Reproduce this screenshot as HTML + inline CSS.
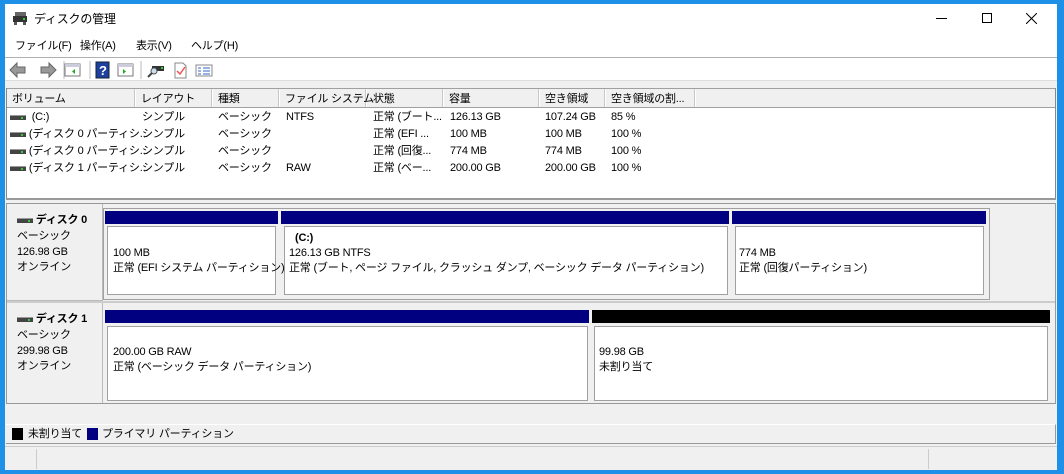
<!DOCTYPE html>
<html><head><meta charset="utf-8"><style>
*{margin:0;padding:0;box-sizing:border-box}
body{width:1064px;height:474px;background:#1e90e8;position:relative;overflow:hidden;font-family:"Liberation Sans","Noto Sans CJK JP",sans-serif;font-size:11px;letter-spacing:-0.2px;color:#000}
.a{position:absolute;white-space:nowrap}
.win{position:absolute;left:5px;top:4px;width:1052px;height:466px;background:#f0f0f0}
.t{line-height:14px}
.hd{position:absolute;top:88px;height:20px;border-top:1px solid #a0a0a0;border-bottom:1px solid #a0a0a0;background:#f0f0f0}
.sep{position:absolute;top:89px;width:2px;height:18px;border-left:1px solid #c8c8c8;border-right:1px solid #fff}
.dsk{display:inline-block;width:16px;height:5px;background:#444;border-top:1px solid #999;position:relative;vertical-align:middle}
.dsk:after{content:"";position:absolute;right:3px;top:1px;width:2px;height:2px;background:#3c3}
.inner{position:absolute;border:1px solid #a0a0a0;background:#fff}
</style></head><body>
<div class="win"></div>
<div class="a" style="left:5px;top:4px;width:1052px;height:53px;background:#fff"></div>
<svg class="a" style="left:12px;top:12px" width="16" height="14"><rect x="3" y="0" width="11" height="4" fill="#666"/><rect x="1" y="4" width="14" height="6" fill="#333"/><rect x="2" y="10" width="3" height="3" fill="#555"/><rect x="11" y="10" width="3" height="3" fill="#555"/><rect x="11" y="6" width="2" height="2" fill="#3c3"/></svg>
<div class="a" style="left:34px;top:10px;font-size:12px;line-height:18px">ディスクの管理</div>
<div class="a" style="left:936px;top:18px;width:11px;height:1px;background:#000"></div>
<div class="a" style="left:982px;top:13px;width:10px;height:10px;border:1px solid #000"></div>
<svg class="a" style="left:1026px;top:13px" width="11" height="11"><path d="M0 0L11 11M11 0L0 11" stroke="#000" stroke-width="1"/></svg>
<div class="a" style="left:15px;top:38px;line-height:16px">ファイル(F)</div>
<div class="a" style="left:80px;top:38px;line-height:16px">操作(A)</div>
<div class="a" style="left:136px;top:38px;line-height:16px">表示(V)</div>
<div class="a" style="left:191px;top:38px;line-height:16px">ヘルプ(H)</div>
<div class="a" style="left:5px;top:57px;width:1052px;height:1px;background:#b0b0b0"></div>
<div class="a" style="left:5px;top:58px;width:1052px;height:23px;background:#fff;border-bottom:1px solid #ddd"></div>
<svg class="a" style="left:8px;top:61px" width="210" height="18">
<path d="M2 9L9 2V6H17V12H9V16Z" fill="#999" stroke="#666"/>
<path d="M48 9L41 2V6H33V12H41V16Z" fill="#999" stroke="#666"/>
<line x1="56" y1="0" x2="56" y2="18" stroke="#bbb"/>
<rect x="57" y="3" width="15" height="12" fill="#fff" stroke="#777"/><rect x="57" y="3" width="15" height="3" fill="#ccd"/><path d="M67 8V13L64 10.5Z" fill="#2a2"/>
<line x1="82" y1="0" x2="82" y2="18" stroke="#bbb"/>
<rect x="88" y="1" width="13" height="16" fill="#2040a0" stroke="#123"/><text x="91" y="14" fill="#fff" font-size="13" font-weight="bold" font-family="Liberation Sans">?</text>
<rect x="110" y="3" width="15" height="12" fill="#fff" stroke="#777"/><rect x="110" y="3" width="15" height="3" fill="#ccd"/><path d="M115 8V13L118 10.5Z" fill="#2a2"/>
<line x1="133" y1="0" x2="133" y2="18" stroke="#bbb"/>
<rect x="144" y="5" width="12" height="5" fill="#333"/><rect x="153" y="6" width="2" height="2" fill="#3c3"/><circle cx="146" cy="10" r="3" fill="#cde" stroke="#555"/><line x1="144" y1="12" x2="140" y2="16" stroke="#444" stroke-width="2"/>
<path d="M167 2H175L178 5V17H167Z" fill="#fff" stroke="#888"/><path d="M169 10L172 13L177 6" stroke="#e55" fill="none" stroke-width="1.5"/>
<rect x="188" y="4" width="16" height="11" fill="#fff" stroke="#888"/><path d="M190 7h3M195 7h7M190 10h3M195 10h7M190 13h3M195 13h7" stroke="#36c"/>
</svg>
<div class="a" style="left:6px;top:88px;width:1050px;height:111px;background:#fff;border-left:1px solid #888;border-right:1px solid #888"></div>
<div class="hd" style="left:7px;width:1048px"></div>
<div class="sep" style="left:134px"></div><div class="sep" style="left:211px"></div><div class="sep" style="left:278px"></div><div class="sep" style="left:365px"></div><div class="sep" style="left:442px"></div><div class="sep" style="left:538px"></div><div class="sep" style="left:604px"></div><div class="sep" style="left:694px"></div>
<div class="a t" style="left:12px;top:92px">ボリューム</div>
<div class="a t" style="left:141px;top:92px">レイアウト</div>
<div class="a t" style="left:218px;top:92px">種類</div>
<div class="a t" style="left:285px;top:92px">ファイル システム</div>
<div class="a t" style="left:373px;top:92px">状態</div>
<div class="a t" style="left:449px;top:92px">容量</div>
<div class="a t" style="left:545px;top:92px">空き領域</div>
<div class="a t" style="left:611px;top:92px">空き領域の割...</div>
<div class="a t" style="left:10px;top:110px"><span class="dsk"></span>&nbsp;&nbsp;(C:)</div>
<div class="a t" style="left:10px;top:127px"><span class="dsk"></span> (ディスク 0 パーティシ...</div>
<div class="a t" style="left:10px;top:144px"><span class="dsk"></span> (ディスク 0 パーティシ...</div>
<div class="a t" style="left:10px;top:161px"><span class="dsk"></span> (ディスク 1 パーティシ...</div>
<div class="a t" style="left:142px;top:110px">シンプル</div><div class="a t" style="left:142px;top:127px">シンプル</div><div class="a t" style="left:142px;top:144px">シンプル</div><div class="a t" style="left:142px;top:161px">シンプル</div>
<div class="a t" style="left:218px;top:110px">ベーシック</div><div class="a t" style="left:218px;top:127px">ベーシック</div><div class="a t" style="left:218px;top:144px">ベーシック</div><div class="a t" style="left:218px;top:161px">ベーシック</div>
<div class="a t" style="left:286px;top:110px">NTFS</div><div class="a t" style="left:286px;top:161px">RAW</div>
<div class="a t" style="left:373px;top:110px">正常 (ブート...</div><div class="a t" style="left:373px;top:127px">正常 (EFI ...</div><div class="a t" style="left:373px;top:144px">正常 (回復...</div><div class="a t" style="left:373px;top:161px">正常 (ベー...</div>
<div class="a t" style="left:450px;top:110px">126.13 GB</div><div class="a t" style="left:450px;top:127px">100 MB</div><div class="a t" style="left:450px;top:144px">774 MB</div><div class="a t" style="left:450px;top:161px">200.00 GB</div>
<div class="a t" style="left:545px;top:110px">107.24 GB</div><div class="a t" style="left:545px;top:127px">100 MB</div><div class="a t" style="left:545px;top:144px">774 MB</div><div class="a t" style="left:545px;top:161px">200.00 GB</div>
<div class="a t" style="left:611px;top:110px">85 %</div><div class="a t" style="left:611px;top:127px">100 %</div><div class="a t" style="left:611px;top:144px">100 %</div><div class="a t" style="left:611px;top:161px">100 %</div>
<div class="a" style="left:6px;top:198px;width:1050px;height:2px;background:#999"></div>
<div class="a" style="left:6px;top:203px;width:1050px;height:201px;border:1px solid #999;background:#f0f0f0"></div>
<div class="a" style="left:7px;top:204px;width:96px;height:97px;border-right:1px solid #bbb;border-bottom:1px solid #bbb"></div>
<div class="a" style="left:7px;top:302px;width:96px;height:101px;border-right:1px solid #bbb"></div>
<div class="a" style="left:7px;top:301px;width:1048px;height:2px;background:#ccc"></div>
<div class="a t" style="left:17px;top:213px;font-weight:bold"><span class="dsk"></span> ディスク 0</div>
<div class="a t" style="left:17px;top:229px">ベーシック</div>
<div class="a t" style="left:17px;top:245px">126.98 GB</div>
<div class="a t" style="left:17px;top:260px">オンライン</div>
<div class="a t" style="left:17px;top:312px;font-weight:bold"><span class="dsk"></span> ディスク 1</div>
<div class="a t" style="left:17px;top:328px">ベーシック</div>
<div class="a t" style="left:17px;top:344px">299.98 GB</div>
<div class="a t" style="left:17px;top:359px">オンライン</div>
<div class="a" style="left:103px;top:208px;width:887px;height:92px;border:1px solid #a0a0a0;background:#f0f0f0"></div>
<div class="a" style="left:105px;top:211px;width:173px;height:13px;background:#000080"></div>
<div class="a" style="left:281px;top:211px;width:448px;height:13px;background:#000080"></div>
<div class="a" style="left:732px;top:211px;width:254px;height:13px;background:#000080"></div>
<div class="inner" style="left:107px;top:226px;width:169px;height:69px"></div>
<div class="inner" style="left:284px;top:226px;width:444px;height:69px"></div>
<div class="inner" style="left:735px;top:226px;width:249px;height:69px"></div>
<div class="a t" style="left:113px;top:246px">100 MB</div>
<div class="a t" style="left:113px;top:261px">正常 (EFI システム パーティション)</div>
<div class="a t" style="left:295px;top:231px;font-weight:bold">(C:)</div>
<div class="a t" style="left:289px;top:246px">126.13 GB NTFS</div>
<div class="a t" style="left:289px;top:261px">正常 (ブート, ページ ファイル, クラッシュ ダンプ, ベーシック データ パーティション)</div>
<div class="a t" style="left:739px;top:246px">774 MB</div>
<div class="a t" style="left:739px;top:261px">正常 (回復パーティション)</div>
<div class="a" style="left:103px;top:306px;width:950px;height:97px;background:#f0f0f0"></div>
<div class="a" style="left:105px;top:310px;width:484px;height:13px;background:#000080"></div>
<div class="a" style="left:592px;top:310px;width:458px;height:13px;background:#000"></div>
<div class="inner" style="left:107px;top:326px;width:481px;height:75px"></div>
<div class="inner" style="left:594px;top:326px;width:454px;height:75px"></div>
<div class="a t" style="left:113px;top:345px">200.00 GB RAW</div>
<div class="a t" style="left:113px;top:360px">正常 (ベーシック データ パーティション)</div>
<div class="a t" style="left:599px;top:345px">99.98 GB</div>
<div class="a t" style="left:599px;top:360px">未割り当て</div>
<div class="a" style="left:6px;top:424px;width:1050px;height:20px;border-top:1px solid #fff;border-bottom:1px solid #999;border-right:1px solid #999;background:#f0f0f0"></div>
<div class="a" style="left:12px;top:428px;width:11px;height:12px;background:#000"></div>
<div class="a t" style="left:28px;top:427px">未割り当て</div>
<div class="a" style="left:87px;top:428px;width:11px;height:12px;background:#000080"></div>
<div class="a t" style="left:102px;top:427px">プライマリ パーティション</div>
<div class="a" style="left:5px;top:446px;width:1052px;height:1px;background:#ccc"></div>
<div class="a" style="left:36px;top:449px;width:1px;height:20px;background:#ccc"></div>
<div class="a" style="left:928px;top:449px;width:1px;height:20px;background:#ccc"></div>
</body></html>
